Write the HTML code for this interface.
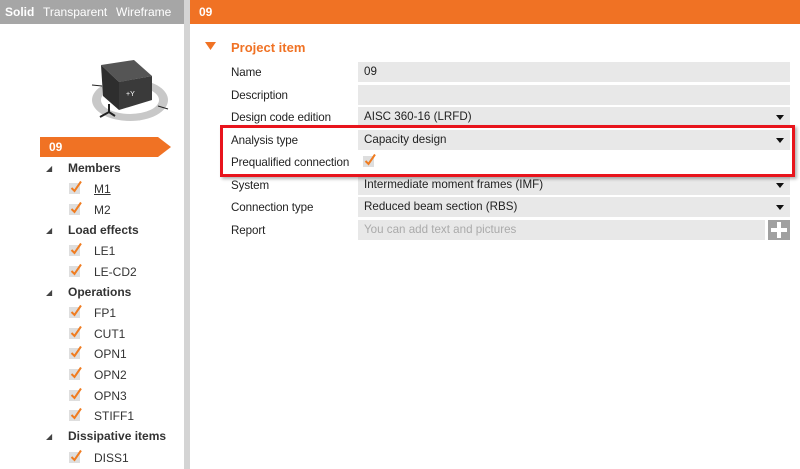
<!DOCTYPE html>
<html><head><style>
*{margin:0;padding:0;box-sizing:border-box}
body{width:800px;height:469px;overflow:hidden;background:#fff;font-family:"Liberation Sans",sans-serif;font-size:12px;color:#222;position:relative}
.a{position:absolute;white-space:nowrap}
.topl{left:0;top:0;width:185px;height:24px;background:#a6a6a6}
.topr{left:190px;top:0;width:610px;height:24px;background:#f07224}
.sep{left:184px;top:0;width:6px;height:469px;background:#d4d4d4}
.tl{color:#fff;top:5px;font-size:12px}
.lbl{left:231px;font-size:11.6px;color:#222;letter-spacing:-0.1px}
.fld{left:358px;width:432px;height:20px;background:#e8e8e8;padding:3px 6px;font-size:11.6px}
.dd::after{content:"";position:absolute;right:6px;top:8px;border-left:4px solid transparent;border-right:4px solid transparent;border-top:5px solid #111}
.cb{width:14px;height:14px}
.grp{font-weight:bold;color:#333;left:68px}
.it{left:94px;color:#333}
.tri{font-size:8px;color:#444}
</style></head><body>
<svg width="0" height="0" style="position:absolute"><defs><symbol id="c" viewBox="0 0 14 14"><rect x="0" y="3" width="11" height="11" fill="#dedede"/><path d="M2.5 8 L5.5 11 L12 1.5" stroke="#f07c20" stroke-width="2" fill="none"/></symbol></defs></svg>
<div class="a topl"></div>
<div class="a topr"></div>
<div class="a sep"></div>
<div class="a tl" style="left:5px;font-weight:bold">Solid</div>
<div class="a tl" style="left:43px">Transparent</div>
<div class="a tl" style="left:116px">Wireframe</div>
<div class="a tl" style="left:199px;font-weight:bold">09</div>

<svg class="a" style="left:85px;top:52px" width="95" height="72" viewBox="0 0 95 72">
<ellipse cx="45" cy="48" rx="38" ry="21" fill="#c8c8c8"/>
<ellipse cx="45" cy="48" rx="29" ry="14" fill="#fff"/>
<polygon points="16,13 49,8 67,24 34,30" fill="#555"/>
<polygon points="16,13 34,30 34,58 18,44" fill="#2e2e2e"/>
<polygon points="34,30 67,24 67,48 34,58" fill="#3a3a3a"/>
<text x="41" y="44" fill="#fff" font-size="7">+Y</text>
<line x1="7" y1="33" x2="17" y2="34" stroke="#222"/>
<line x1="73" y1="54" x2="83" y2="57" stroke="#222"/>
<path d="M15 65 L24 60 L30 64 M24 60 L24 52" stroke="#222" fill="none" stroke-width="2"/>
</svg>

<svg class="a" style="left:40px;top:137px" width="131" height="20"><polygon points="0,0 118,0 131,10 118,20 0,20" fill="#f07224"/></svg>
<div class="a" style="left:49px;top:140px;color:#fff;font-weight:bold">09</div>

<div class="a tri" style="left:46px;top:164px">◢</div><div class="a grp" style="top:161px">Members</div>
<svg class="a cb" style="left:69px;top:180px"><use href="#c"/></svg><div class="a it" style="top:182px;text-decoration:underline">M1</div>
<svg class="a cb" style="left:69px;top:201px"><use href="#c"/></svg><div class="a it" style="top:203px">M2</div>
<div class="a tri" style="left:46px;top:226px">◢</div><div class="a grp" style="top:223px">Load effects</div>
<svg class="a cb" style="left:69px;top:242px"><use href="#c"/></svg><div class="a it" style="top:244px">LE1</div>
<svg class="a cb" style="left:69px;top:263px"><use href="#c"/></svg><div class="a it" style="top:265px">LE-CD2</div>
<div class="a tri" style="left:46px;top:288px">◢</div><div class="a grp" style="top:285px">Operations</div>
<svg class="a cb" style="left:69px;top:304px"><use href="#c"/></svg><div class="a it" style="top:306px">FP1</div>
<svg class="a cb" style="left:69px;top:325px"><use href="#c"/></svg><div class="a it" style="top:327px">CUT1</div>
<svg class="a cb" style="left:69px;top:345px"><use href="#c"/></svg><div class="a it" style="top:347px">OPN1</div>
<svg class="a cb" style="left:69px;top:366px"><use href="#c"/></svg><div class="a it" style="top:368px">OPN2</div>
<svg class="a cb" style="left:69px;top:387px"><use href="#c"/></svg><div class="a it" style="top:389px">OPN3</div>
<svg class="a cb" style="left:69px;top:407px"><use href="#c"/></svg><div class="a it" style="top:409px">STIFF1</div>
<div class="a tri" style="left:46px;top:432px">◢</div><div class="a grp" style="top:429px">Dissipative items</div>
<svg class="a cb" style="left:69px;top:449px"><use href="#c"/></svg><div class="a it" style="top:451px">DISS1</div>

<svg class="a" style="left:205px;top:42px" width="11" height="9"><polygon points="0,0 11,0 5.5,8" fill="#f07224"/></svg>
<div class="a" style="left:231px;top:40px;color:#f07224;font-weight:bold;font-size:13px">Project item</div>

<div class="a lbl" style="top:66px">Name</div><div class="a fld" style="top:62px">09</div>
<div class="a lbl" style="top:89px">Description</div><div class="a fld" style="top:85px"></div>
<div class="a lbl" style="top:111px">Design code edition</div><div class="a fld dd" style="top:107px">AISC 360-16 (LRFD)</div>
<div class="a lbl" style="top:134px">Analysis type</div><div class="a fld dd" style="top:130px">Capacity design</div>
<div class="a lbl" style="top:156px">Prequalified connection</div>
<svg class="a cb" style="left:363px;top:153px"><use href="#c"/></svg>
<div class="a lbl" style="top:179px">System</div><div class="a fld dd" style="top:175px">Intermediate moment frames (IMF)</div>
<div class="a lbl" style="top:201px">Connection type</div><div class="a fld dd" style="top:197px">Reduced beam section (RBS)</div>
<div class="a lbl" style="top:224px">Report</div><div class="a fld" style="top:220px;width:407px;color:#aaa">You can add text and pictures</div>
<div class="a" style="left:768px;top:220px;width:22px;height:20px;background:#a0a0a0"></div>
<div class="a" style="left:771px;top:228px;width:16px;height:4px;background:#fff"></div>
<div class="a" style="left:777px;top:222px;width:4px;height:16px;background:#fff"></div>

<div class="a" style="left:220px;top:125px;width:575px;height:52px;border:3px solid #e8141c;box-shadow:2px 2px 3px rgba(0,0,0,.3)"></div>
</body></html>
